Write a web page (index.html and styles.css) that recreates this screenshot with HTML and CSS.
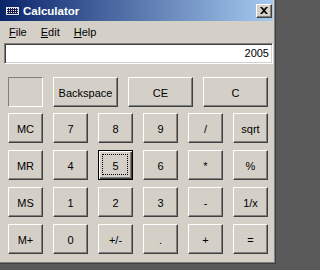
FILE: index.html
```html
<!DOCTYPE html>
<html>
<head>
<meta charset="utf-8">
<link rel="stylesheet" href="styles.css">
</head>
<body>
<div class="window">
  <div class="titlebar">
    <svg class="appicon" width="15" height="10" viewBox="0 0 15 10">
      <rect x="0" y="0" width="15" height="10" fill="#0A246A"/>
      <rect x="1" y="1" width="13" height="8" fill="#E8E8E8"/>
      <g fill="#1a1a50">
        <rect x="2" y="3" width="11" height="1"/>
        <rect x="2" y="5" width="11" height="1"/>
        <rect x="2" y="7" width="11" height="1"/>
        <rect x="3" y="2" width="1" height="6"/>
        <rect x="5" y="2" width="1" height="6"/>
        <rect x="7" y="2" width="1" height="6"/>
        <rect x="9" y="2" width="1" height="6"/>
        <rect x="11" y="2" width="1" height="6"/>
      </g>
    </svg>
    <span class="title">Calculator</span>
    <span class="closebtn">
      <svg width="8" height="7" viewBox="0 0 8 7"><path d="M0 0h2l2 2 2-2h2L5 3.5 8 7H6L4 5 2 7H0l3-3.5z" fill="#000"/></svg>
    </span>
  </div>
  <div class="menubar">
    <span class="menuitem"><u>F</u>ile</span>
    <span class="menuitem"><u>E</u>dit</span>
    <span class="menuitem"><u>H</u>elp</span>
  </div>
  <div class="display">2005</div>
  <div class="keypad">
    <div class="toprow">
      <div class="memind"></div>
      <button class="key wide">Backspace</button>
      <button class="key wide">CE</button>
      <button class="key wide">C</button>
    </div>
    <div class="grid">
      <button class="key">MC</button>
      <button class="key">7</button>
      <button class="key">8</button>
      <button class="key">9</button>
      <button class="key">/</button>
      <button class="key">sqrt</button>
      <button class="key">MR</button>
      <button class="key">4</button>
      <button class="key focus">5</button>
      <button class="key">6</button>
      <button class="key">*</button>
      <button class="key">%</button>
      <button class="key">MS</button>
      <button class="key">1</button>
      <button class="key">2</button>
      <button class="key">3</button>
      <button class="key">-</button>
      <button class="key">1/x</button>
      <button class="key">M+</button>
      <button class="key">0</button>
      <button class="key">+/-</button>
      <button class="key">.</button>
      <button class="key">+</button>
      <button class="key">=</button>
    </div>
  </div>
</div>
</body>
</html>
```
FILE: styles.css
```css
* { box-sizing: border-box; margin: 0; padding: 0; }
html, body { width: 278px; height: 270px; overflow: hidden; }
body {
  background: #5a5a5a;
  font-family: "Liberation Sans", Arial, sans-serif;
  font-size: 11px;
  color: #000;
}
.window {
  width: 276px;
  height: 264px;
  padding-right: 2px;
  background: #D4D0C8;
  border-right: 1px solid #404040;
  border-bottom: 1px solid #404040;
  box-shadow: inset -1px -1px #808080;
}
.titlebar {
  height: 21px;
  display: flex;
  align-items: center;
  padding: 0 1px 0 5px;
  background: linear-gradient(to right, #0A246A, #A6CAF0);
}
.appicon { display: block; margin-right: 3px; margin-top: 1px; }
.title {
  color: #fff;
  font-weight: bold;
  font-size: 11.5px;
  flex: 1;
}
.closebtn {
  width: 16px;
  height: 14px;
  background: #D4D0C8;
  border: 1px solid;
  border-color: #fff #404040 #404040 #fff;
  box-shadow: inset -1px -1px #808080;
  display: flex;
  align-items: center;
  justify-content: center;
  padding-right: 1px;
}
.closebtn svg { display: block; }
.menubar {
  height: 20px;
  display: flex;
  align-items: center;
  gap: 14px;
  padding-left: 9px;
  padding-top: 1px;
}
.menuitem u { text-decoration: underline; text-underline-offset: 1px; }
.display {
  margin: 2px 0 0 4px;
  width: 269px;
  height: 21px;
  background: #fff;
  border-top: 1px solid #808080;
  border-left: 1px solid #808080;
  border-right: 1px solid #fff;
  border-bottom: 1px solid #fff;
  box-shadow: inset 1px 1px #404040, inset -1px -1px #D4D0C8;
  text-align: right;
  padding-right: 3px;
  line-height: 19px;
}
.keypad { padding: 13px 0 0 8px; }
.toprow {
  display: flex;
  gap: 10px;
  height: 30px;
  margin-bottom: 6px;
}
.memind {
  width: 35px;
  height: 30px;
  border: 1px solid;
  border-color: #808080 #fff #fff #808080;
}
.grid {
  display: grid;
  grid-template-columns: repeat(6, 35px);
  grid-auto-rows: 30px;
  column-gap: 10px;
  row-gap: 7px;
}
.key {
  font: inherit;
  color: #000;
  background: #D4D0C8;
  height: 30px;
  width: 35px;
  border: 1px solid;
  border-color: #fff #404040 #404040 #fff;
  box-shadow: inset -1px -1px #808080;
  display: flex;
  align-items: center;
  justify-content: center;
  padding-top: 1px;
  position: relative;
}
.key.wide { width: 65px; }
.key.focus {
  border: 1px solid #000;
  box-shadow: inset 1px 1px #fff, inset -1px -1px #404040, inset -2px -2px #808080;
}
.key.focus::after {
  content: "";
  position: absolute;
  left: 3px;
  top: 3px;
  right: 4px;
  bottom: 4px;
  border: 1px dotted #000;
}
```
